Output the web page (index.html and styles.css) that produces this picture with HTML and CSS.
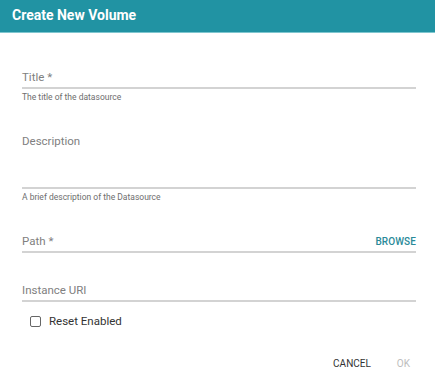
FILE: index.html
```html
<!DOCTYPE html>
<html lang="en">
<head>
    <meta charset="UTF-8">
    <meta name="viewport" content="width=device-width, initial-scale=1.0">
    <title>Create New Volume</title>
    <link rel="stylesheet" href="styles.css">
</head>
<body>
    <div class="dialog">
        <header class="dialog-title">Create New Volume</header>

        <form class="dialog-body">
            <div class="field field-title">
                <div class="field-input"><span class="field-label">Title *</span></div>
                <div class="field-hint">The title of the datasource</div>
            </div>

            <div class="field field-desc">
                <div class="field-input field-multiline"><span class="field-label">Description</span></div>
                <div class="field-hint">A brief description of the Datasource</div>
            </div>

            <div class="field field-path">
                <div class="field-input">
                    <span class="field-label">Path *</span>
                    <span class="browse">BROWSE</span>
                </div>
            </div>

            <div class="field field-uri">
                <div class="field-input"><span class="field-label">Instance URI</span></div>
            </div>

            <label class="check-row">
                <span class="check-box"></span>
                <span class="check-label">Reset Enabled</span>
            </label>
        </form>

        <footer class="dialog-actions">
            <span class="btn">CANCEL</span>
            <span class="btn btn-disabled">OK</span>
        </footer>
    </div>
</body>
</html>
```

FILE: styles.css
```css
body {
    margin: 0;
    font-family: Roboto, "Liberation Sans", Arial, sans-serif;
    background: #fff;
}
.dialog {
    width: 435px;
    height: 373px;
    display: flex;
    flex-direction: column;
}
.dialog-title {
    height: 32px;
    line-height: 30px;
    padding-left: 12px;
    background-color: #2193a3;
    border-bottom: 1px solid #7fc6cf;
    color: #fff;
    font-size: 14px;
    font-weight: bold;
}
.dialog-body {
    padding: 0 19px 0 22px;
    margin: 0;
}
.field-input {
    display: flex;
    justify-content: space-between;
    align-items: center;
    border-bottom: 2px solid #d3d3d3;
    padding-bottom: 3px;
}
.field-label {
    font-size: 11.5px;
    line-height: 14px;
    color: #808080;
}
.field-multiline {
    align-items: flex-start;
    padding-bottom: 39px;
}
.field-hint {
    margin-top: 3px;
    font-size: 8.5px;
    line-height: 11px;
    color: #6e6e6e;
}
.field-title {
    margin-top: 37px;
}
.field-desc {
    margin-top: 31px;
}
.field-path {
    margin-top: 31px;
}
.field-uri {
    margin-top: 30px;
}
.browse {
    font-size: 10px;
    font-weight: 500;
    color: #2a8a99;
    letter-spacing: 0.1px;
}
.check-row {
    display: flex;
    align-items: center;
    margin: 12px 0 0 8px;
}
.check-box {
    width: 9px;
    height: 9px;
    border: 1.5px solid #666;
    border-radius: 2px;
}
.check-label {
    margin-left: 8px;
    font-size: 11.5px;
    color: #333;
}
.dialog-actions {
    margin-top: auto;
    display: flex;
    justify-content: flex-end;
    gap: 26px;
    padding: 0 25px 0 0;
    height: 20px;
    align-items: center;
}
.btn {
    font-size: 10px;
    color: #333;
}
.btn-disabled {
    color: #bdbdbd;
}
```
